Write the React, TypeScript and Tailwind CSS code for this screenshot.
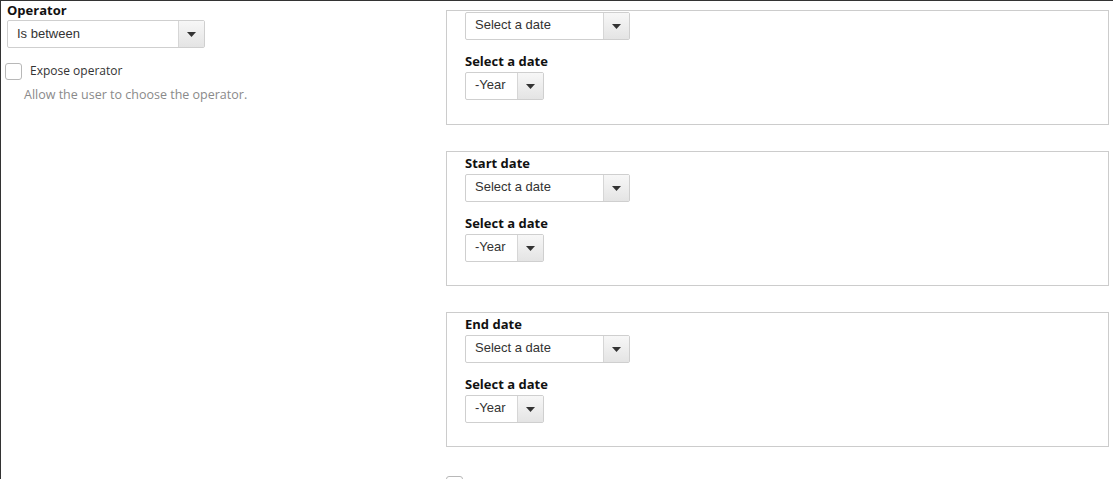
import React from "react";

const sans = { fontFamily: '"Open Sans", "Noto Sans", sans-serif' };
const arial = { fontFamily: '"Liberation Sans", Arial, sans-serif' };

function Caret() {
  return (
    <svg width="9" height="5" viewBox="0 0 9 5" className="block">
      <path d="M0 0h9L4.5 5z" fill="#333" />
    </svg>
  );
}

function FakeSelect({
  value,
  width,
  arrowWidth = 26,
  raised = true,
}: {
  value: string;
  width: number;
  arrowWidth?: number;
  raised?: boolean;
}) {
  return (
    <div
      className="flex h-[28px] rounded-[2px] border border-[#cfcfcf] bg-white text-[13px] text-[#333]"
      style={{ width, ...arial }}
    >
      <div className={`flex flex-1 items-center pl-[9px] leading-none ${raised ? "pb-[4px]" : "pb-[2px]"}`}>
        {value}
      </div>
      <div
        className="flex items-center justify-center border-l border-[#d6d6d6] bg-gradient-to-b from-[#f7f7f7] to-[#e4e4e4]"
        style={{ width: arrowWidth }}
      >
        <Caret />
      </div>
    </div>
  );
}

function Label({ children }: { children: React.ReactNode }) {
  return (
    <div className="h-[18px] text-[13px] font-bold leading-[18px] text-[#111]" style={sans}>
      {children}
    </div>
  );
}

function DateFieldset({ label, first }: { label?: string; first?: boolean }) {
  return (
    <div
      className={`border border-[#cccccc] pl-[18px] ${first ? "pt-[1px] pb-[24px]" : "pt-[2px] pb-[23px]"}`}
    >
      {label && (
        <div className="mb-[2px]">
          <Label>{label}</Label>
        </div>
      )}
      <FakeSelect value="Select a date" width={165} />
      <div className="mt-[12px] mb-[2px]">
        <Label>Select a date</Label>
      </div>
      <FakeSelect value="-Year" width={79} />
    </div>
  );
}

export default function App() {
  return (
    <div className="h-[479px] w-[1113px] overflow-hidden bg-white border-t border-l border-[#333]">
      <div className="flex">
        <div className="w-[445px] shrink-0 pl-[6px]">
          <Label>Operator</Label>
          <div className="mt-[1px]">
            <FakeSelect value="Is between" width={198} raised={false} />
          </div>
          <div className="mt-[14px] flex items-center">
            <div className="-ml-[2px] h-[17px] w-[17px] rounded-[3px] border border-[#b8b8b8] bg-white" />
            <span className="ml-[8px] text-[12px] text-[#333]" style={sans}>
              Expose operator
            </span>
          </div>
          <div className="mt-[6px] pl-[17px] text-[12.5px] text-[#8a8a8a]" style={sans}>
            Allow the user to choose the operator.
          </div>
        </div>
        <div className="w-[663px] shrink-0 pt-[9px]">
          <DateFieldset first />
          <div className="mt-[26px]">
            <DateFieldset label="Start date" />
          </div>
          <div className="mt-[26px]">
            <DateFieldset label="End date" />
          </div>
          <div className="mt-[29px] h-[17px] w-[17px] rounded-[3px] border border-[#b8b8b8] bg-white" />
        </div>
      </div>
    </div>
  );
}
